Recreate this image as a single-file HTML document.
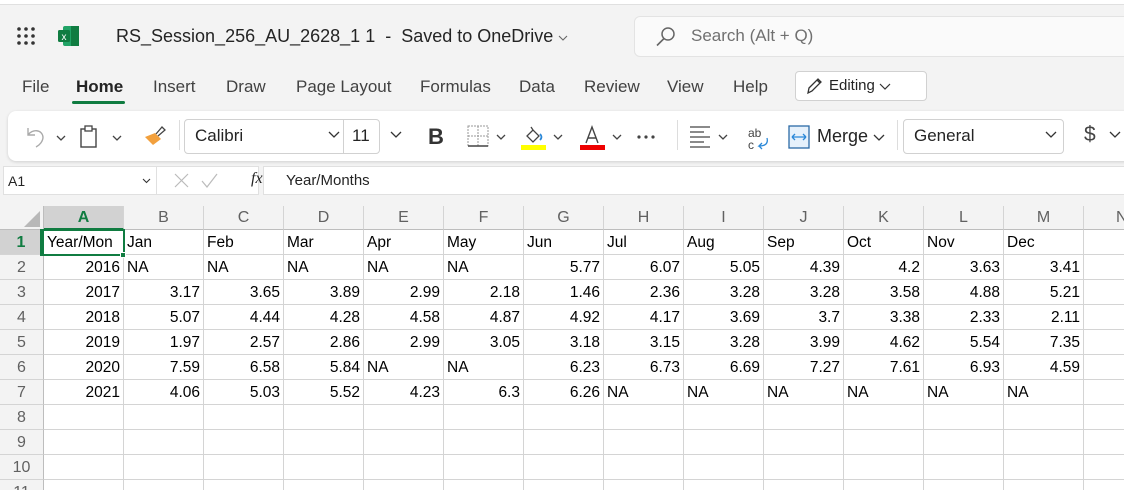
<!DOCTYPE html>
<html style="overflow:hidden;height:490px"><head><meta charset="utf-8"><style>
*{box-sizing:border-box;margin:0;padding:0}
body{width:1124px;height:490px;overflow:hidden;background:#f3f3f3;font-family:"Liberation Sans",sans-serif;position:relative;color:#242424}
.a{position:absolute;white-space:nowrap}
.tab{position:absolute;top:77px;font-size:17px;color:#424242}
.grid{position:absolute;left:0;top:206px;width:1124px;height:284px;background:#fff;overflow:hidden}
.ch{position:absolute;top:0;height:24px;background:#f3f3f3;border-right:1px solid #d4d4d4;border-bottom:1px solid #bdbdbd;text-align:center;font-size:16px;line-height:24px;color:#616161}
.rh{position:absolute;left:0;width:44px;height:25px;background:#f3f3f3;border-bottom:1px solid #d4d4d4;border-right:1px solid #bdbdbd;text-align:center;font-size:16px;line-height:25px;color:#616161}
.c{position:absolute;height:25px;font-size:15.5px;line-height:25px;color:#000;padding:0 3px;overflow:hidden}
</style></head><body>
<div class="a" style="left:0;top:0;width:1124px;height:5px;background:#fff;border-bottom:1px solid #e0e0e0"></div>
<svg class="a" style="left:16px;top:26px" width="22" height="20"><g fill="#333"><circle cx="3" cy="3" r="1.8"/><circle cx="10" cy="3" r="1.8"/><circle cx="17" cy="3" r="1.8"/><circle cx="3" cy="10" r="1.8"/><circle cx="10" cy="10" r="1.8"/><circle cx="17" cy="10" r="1.8"/><circle cx="3" cy="17" r="1.8"/><circle cx="10" cy="17" r="1.8"/><circle cx="17" cy="17" r="1.8"/></g></svg>
<svg class="a" style="left:58px;top:25px" width="22" height="22"><rect x="5" y="1" width="16" height="20" rx="2" fill="#21a366"/><rect x="13" y="1" width="8" height="20" fill="#107c41"/><rect x="0" y="5" width="12" height="12" rx="1.5" fill="#107c41"/><text x="6" y="15" font-size="10" fill="#fff" text-anchor="middle" font-family="Liberation Sans">x</text></svg>
<div class="a" style="left:116px;top:26px;font-size:18px;color:#242424">RS_Session_256_AU_2628_1 1&nbsp; - &nbsp;Saved to OneDrive <svg width="10" height="8"><path d="M1 2l4 4l4 -4" fill="none" stroke="#666" stroke-width="1.1"/></svg></div>
<div class="a" style="left:634px;top:16px;width:500px;height:41px;background:#fafafa;border:1px solid #e3e3e3;border-radius:6px"></div>
<svg class="a" style="left:655px;top:26px" width="22" height="22"><circle cx="13" cy="8" r="6" fill="none" stroke="#666" stroke-width="1.5"/><line x1="9" y1="12.5" x2="2" y2="19.5" stroke="#666" stroke-width="1.6"/></svg>
<div class="a" style="left:691px;top:26px;font-size:17px;color:#707070">Search (Alt + Q)</div>
<div class="tab" style="left:22px">File</div>
<div class="tab" style="left:76px;color:#242424;font-weight:bold">Home</div>
<div class="a" style="left:72px;top:101px;width:53px;height:3px;background:#107c41;border-radius:2px"></div>
<div class="tab" style="left:153px">Insert</div>
<div class="tab" style="left:226px">Draw</div>
<div class="tab" style="left:296px">Page Layout</div>
<div class="tab" style="left:420px">Formulas</div>
<div class="tab" style="left:519px">Data</div>
<div class="tab" style="left:584px">Review</div>
<div class="tab" style="left:667px">View</div>
<div class="tab" style="left:733px">Help</div>
<div class="a" style="left:795px;top:71px;width:132px;height:30px;background:#fff;border:1px solid #d1d1d1;border-radius:4px"></div>
<svg class="a" style="left:805px;top:76px" width="18" height="20"><path d="M3 17 L4 12 L13 3 L16 6 L7 15 Z M12 4 L15 7" fill="none" stroke="#333" stroke-width="1.3"/></svg>
<div class="a" style="left:829px;top:77px;font-size:15px;color:#242424">Editing <svg width="12" height="8"><path d="M1 2l5 5l5 -5" fill="none" stroke="#333" stroke-width="1.2"/></svg></div>
<div class="a" style="left:8px;top:111px;width:1130px;height:50px;background:#fff;border-radius:8px;box-shadow:0 1px 3px rgba(0,0,0,.15)"></div>
<svg class="a" style="left:24px;top:124px" width="160" height="26"><path d="M4 4 L4 11 L11 11 M4 11 C8 5 18 5 19 13 C19 17 16 21 12 23" fill="none" stroke="#aaa" stroke-width="1.4"/><path d="M33 12 l4 4 l4 -4" fill="none" stroke="#444" stroke-width="1.3"/><rect x="57" y="5" width="15" height="18" fill="none" stroke="#444" stroke-width="1.4"/><rect x="61" y="2" width="7" height="5" fill="#fff" stroke="#444" stroke-width="1.3"/><path d="M89 12 l4 4 l4 -4" fill="none" stroke="#444" stroke-width="1.3"/><path d="M121 13 l8 8 l8 -6 l-6 -6 Z" fill="#f2a03d"/><path d="M132 10 l6 -7 l3 3 l-7 6" fill="none" stroke="#444" stroke-width="1.3"/></svg>
<div class="a" style="left:179px;top:120px;width:1px;height:30px;background:#ddd"></div>
<div class="a" style="left:184px;top:119px;width:196px;height:35px;border:1px solid #d1d1d1;border-radius:4px;background:#fff"></div>
<div class="a" style="left:343px;top:120px;width:1px;height:33px;background:#d1d1d1"></div>
<div class="a" style="left:195px;top:126px;font-size:17px">Calibri</div>
<svg class="a" style="left:328px;top:131px" width="12" height="8"><path d="M1 1l5 5l5 -5" fill="none" stroke="#333" stroke-width="1.3"/></svg>
<div class="a" style="left:352px;top:126px;font-size:17px">11</div>
<svg class="a" style="left:390px;top:131px" width="12" height="8"><path d="M1 1l5 5l5 -5" fill="none" stroke="#333" stroke-width="1.3"/></svg>
<div class="a" style="left:428px;top:124px;font-size:22px;font-weight:bold;color:#333">B</div>
<svg class="a" style="left:466px;top:124px" width="220" height="28"><rect x="2" y="2" width="20" height="20" fill="none" stroke="#999" stroke-dasharray="2 1"/><line x1="12" y1="2" x2="12" y2="22" stroke="#999" stroke-dasharray="2 1"/><line x1="2" y1="12" x2="22" y2="12" stroke="#999" stroke-dasharray="2 1"/><line x1="2" y1="22" x2="22" y2="22" stroke="#444" stroke-width="1.4"/><path d="M31 11 l4 4 l4 -4" fill="none" stroke="#444" stroke-width="1.3"/><path d="M61 12 l6 -6 l6 6 l-6 6 Z M65 3 l2 3" fill="none" stroke="#444" stroke-width="1.3"/><path d="M74 10 q3 3 0 6" fill="none" stroke="#2b88d8" stroke-width="1.8"/><rect x="55" y="21" width="25" height="5" fill="#ffff00"/><path d="M88 11 l4 4 l4 -4" fill="none" stroke="#444" stroke-width="1.3"/><path d="M120 19 l6 -16 l6 16 M122 14 h8" fill="none" stroke="#444" stroke-width="1.4"/><rect x="114" y="21" width="25" height="5" fill="#e00"/><path d="M147 11 l4 4 l4 -4" fill="none" stroke="#444" stroke-width="1.3"/><circle cx="173" cy="13" r="1.6" fill="#444"/><circle cx="180" cy="13" r="1.6" fill="#444"/><circle cx="187" cy="13" r="1.6" fill="#444"/></svg>
<div class="a" style="left:677px;top:120px;width:1px;height:30px;background:#ddd"></div>
<svg class="a" style="left:688px;top:124px" width="210" height="28"><path d="M2 3h20M2 8h14M2 13h20M2 18h14M2 23h20" stroke="#444" stroke-width="1.3"/><path d="M31 11 l4 4 l4 -4" fill="none" stroke="#444" stroke-width="1.3"/><text x="60" y="13" font-size="12" fill="#444" font-family="Liberation Sans">ab</text><text x="60" y="25" font-size="12" fill="#444" font-family="Liberation Sans">c</text><path d="M79 14 q2 8 -8 8 l3 -3 M71 22 l3 3" fill="none" stroke="#2b88d8" stroke-width="1.3"/><rect x="101" y="2" width="20" height="22" fill="#e6f1fb" stroke="#2b6aa6" stroke-width="1.3"/><path d="M104 13h14M104 13l3 -3M104 13l3 3M118 13l-3 -3M118 13l-3 3" fill="none" stroke="#2b88d8" stroke-width="1.3"/></svg>
<div class="a" style="left:817px;top:126px;font-size:18px">Merge <svg width="12" height="8"><path d="M1 1l5 5l5 -5" fill="none" stroke="#333" stroke-width="1.3"/></svg></div>
<div class="a" style="left:897px;top:120px;width:1px;height:30px;background:#ddd"></div>
<div class="a" style="left:903px;top:119px;width:161px;height:35px;border:1px solid #d1d1d1;border-radius:4px;background:#fff"></div>
<div class="a" style="left:914px;top:126px;font-size:17px">General</div>
<svg class="a" style="left:1045px;top:131px" width="12" height="8"><path d="M1 1l5 5l5 -5" fill="none" stroke="#333" stroke-width="1.3"/></svg>
<div class="a" style="left:1084px;top:123px;font-size:21px;color:#444">$</div>
<svg class="a" style="left:1109px;top:131px" width="12" height="8"><path d="M1 1l5 5l5 -5" fill="none" stroke="#333" stroke-width="1.3"/></svg>
<div class="a" style="left:3px;top:166px;width:155px;height:29px;background:#fff;border:1px solid #e0e0e0"></div>
<div class="a" style="left:8px;top:173px;font-size:14px">A1</div>
<svg class="a" style="left:142px;top:178px" width="9" height="6"><path d="M1 1l3.5 3.5l3.5 -3.5" fill="none" stroke="#333" stroke-width="1.1"/></svg>
<div class="a" style="left:156px;top:166px;width:103px;height:29px;background:#fff;border:1px solid #e0e0e0"></div>
<svg class="a" style="left:173px;top:172px" width="70" height="18"><path d="M2 2l13 13M15 2L2 15" stroke="#bbb" stroke-width="1.2"/><path d="M29 9l5 6l10 -13" fill="none" stroke="#bbb" stroke-width="1.2"/></svg>
<div class="a" style="left:251px;top:170px;font-size:16px;font-style:italic;font-family:'Liberation Serif',serif">fx</div>
<div class="a" style="left:263px;top:166px;width:870px;height:29px;background:#fff;border:1px solid #e0e0e0"></div>
<div class="a" style="left:286px;top:172px;font-size:15px">Year/Months</div>
<div class="grid">
<div class="a" style="left:0;top:0;width:44px;height:24px;background:#f3f3f3;border-right:1px solid #bdbdbd;border-bottom:1px solid #bdbdbd"></div>
<svg class="a" style="left:22px;top:3px" width="20" height="20"><path d="M18 2 L18 18 L2 18 Z" fill="#b8b8b8"/></svg>
<div class="ch" style="left:44px;width:80px;background:#d2d2d2;color:#107c41;font-weight:bold;border-bottom:2px solid #107c41">A</div>
<div class="ch" style="left:124px;width:80px">B</div><div class="ch" style="left:204px;width:80px">C</div><div class="ch" style="left:284px;width:80px">D</div><div class="ch" style="left:364px;width:80px">E</div><div class="ch" style="left:444px;width:80px">F</div><div class="ch" style="left:524px;width:80px">G</div><div class="ch" style="left:604px;width:80px">H</div><div class="ch" style="left:684px;width:80px">I</div><div class="ch" style="left:764px;width:80px">J</div><div class="ch" style="left:844px;width:80px">K</div><div class="ch" style="left:924px;width:80px">L</div><div class="ch" style="left:1004px;width:80px">M</div><div class="ch" style="left:1084px;width:80px;text-align:left;padding-left:32px">N</div>
<svg class="a" style="left:44px;top:24px" width="1080" height="260">
<g stroke="#d4d4d4" stroke-width="1">
<line x1="79.5" y1="0" x2="79.5" y2="260"/><line x1="159.5" y1="0" x2="159.5" y2="260"/><line x1="239.5" y1="0" x2="239.5" y2="260"/><line x1="319.5" y1="0" x2="319.5" y2="260"/><line x1="399.5" y1="0" x2="399.5" y2="260"/><line x1="479.5" y1="0" x2="479.5" y2="260"/><line x1="559.5" y1="0" x2="559.5" y2="260"/><line x1="639.5" y1="0" x2="639.5" y2="260"/><line x1="719.5" y1="0" x2="719.5" y2="260"/><line x1="799.5" y1="0" x2="799.5" y2="260"/><line x1="879.5" y1="0" x2="879.5" y2="260"/><line x1="959.5" y1="0" x2="959.5" y2="260"/><line x1="1039.5" y1="0" x2="1039.5" y2="260"/>
<line x1="0" y1="24.5" x2="1080" y2="24.5"/><line x1="0" y1="49.5" x2="1080" y2="49.5"/><line x1="0" y1="74.5" x2="1080" y2="74.5"/><line x1="0" y1="99.5" x2="1080" y2="99.5"/><line x1="0" y1="124.5" x2="1080" y2="124.5"/><line x1="0" y1="149.5" x2="1080" y2="149.5"/><line x1="0" y1="174.5" x2="1080" y2="174.5"/><line x1="0" y1="199.5" x2="1080" y2="199.5"/><line x1="0" y1="224.5" x2="1080" y2="224.5"/><line x1="0" y1="249.5" x2="1080" y2="249.5"/>
</g></svg>
<div class="rh" style="top:24px;background:#d2d2d2;color:#107c41;font-weight:bold;border-right:2px solid #107c41">1</div>
<div class="rh" style="top:49px">2</div><div class="rh" style="top:74px">3</div><div class="rh" style="top:99px">4</div><div class="rh" style="top:124px">5</div><div class="rh" style="top:149px">6</div><div class="rh" style="top:174px">7</div><div class="rh" style="top:199px">8</div><div class="rh" style="top:224px">9</div><div class="rh" style="top:249px">10</div><div class="rh" style="top:274px">11</div>
<div class="a" style="left:40px;top:23px;width:85px;height:27px;border:2px solid #107c41"></div>
<div class="a" style="left:120px;top:46px;width:6px;height:6px;background:#107c41;border:1px solid #fff"></div>
</div>
<div style="position:absolute;left:0;top:230px">
<div class="c" style="left:44px;top:0;width:80px">Year/Mon</div>
<div class="c" style="left:124px;top:0">Jan</div><div class="c" style="left:204px;top:0">Feb</div><div class="c" style="left:284px;top:0">Mar</div><div class="c" style="left:364px;top:0">Apr</div><div class="c" style="left:444px;top:0">May</div><div class="c" style="left:524px;top:0">Jun</div><div class="c" style="left:604px;top:0">Jul</div><div class="c" style="left:684px;top:0">Aug</div><div class="c" style="left:764px;top:0">Sep</div><div class="c" style="left:844px;top:0">Oct</div><div class="c" style="left:924px;top:0">Nov</div><div class="c" style="left:1004px;top:0">Dec</div>
</div>
<style>.rw{position:absolute;left:44px;display:flex;height:25px}.rw span{width:80px;font-size:15.5px;line-height:25px;color:#000;text-align:right;padding-right:4px}.rw span.l{text-align:left;padding-left:3px}</style>
<div class="rw" style="top:255px"><span>2016</span><span class="l">NA</span><span class="l">NA</span><span class="l">NA</span><span class="l">NA</span><span class="l">NA</span><span>5.77</span><span>6.07</span><span>5.05</span><span>4.39</span><span>4.2</span><span>3.63</span><span>3.41</span></div>
<div class="rw" style="top:280px"><span>2017</span><span>3.17</span><span>3.65</span><span>3.89</span><span>2.99</span><span>2.18</span><span>1.46</span><span>2.36</span><span>3.28</span><span>3.28</span><span>3.58</span><span>4.88</span><span>5.21</span></div>
<div class="rw" style="top:305px"><span>2018</span><span>5.07</span><span>4.44</span><span>4.28</span><span>4.58</span><span>4.87</span><span>4.92</span><span>4.17</span><span>3.69</span><span>3.7</span><span>3.38</span><span>2.33</span><span>2.11</span></div>
<div class="rw" style="top:330px"><span>2019</span><span>1.97</span><span>2.57</span><span>2.86</span><span>2.99</span><span>3.05</span><span>3.18</span><span>3.15</span><span>3.28</span><span>3.99</span><span>4.62</span><span>5.54</span><span>7.35</span></div>
<div class="rw" style="top:355px"><span>2020</span><span>7.59</span><span>6.58</span><span>5.84</span><span class="l">NA</span><span class="l">NA</span><span>6.23</span><span>6.73</span><span>6.69</span><span>7.27</span><span>7.61</span><span>6.93</span><span>4.59</span></div>
<div class="rw" style="top:380px"><span>2021</span><span>4.06</span><span>5.03</span><span>5.52</span><span>4.23</span><span>6.3</span><span>6.26</span><span class="l">NA</span><span class="l">NA</span><span class="l">NA</span><span class="l">NA</span><span class="l">NA</span><span class="l">NA</span></div>
</body></html>
